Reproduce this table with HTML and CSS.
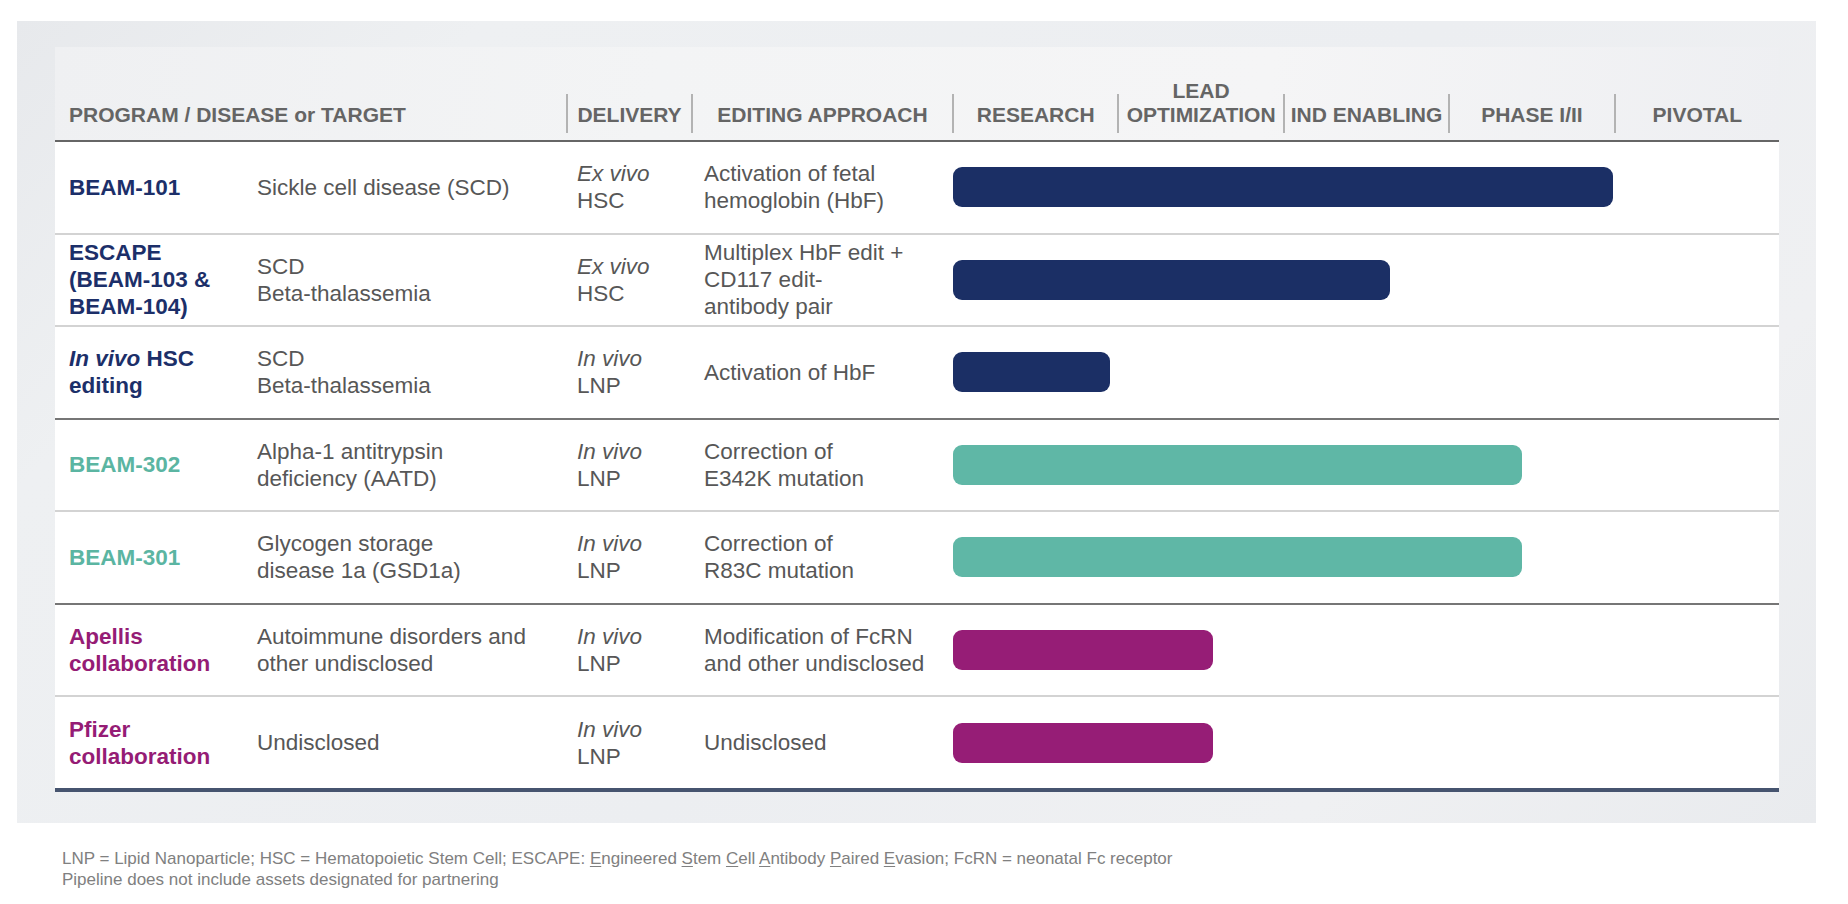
FILE: index.html
```html
<!DOCTYPE html>
<html lang="en">
<head>
<meta charset="utf-8">
<title>Pipeline</title>
<link rel="stylesheet" href="styles.css">
</head>
<body>
<div class="panel">
  <div class="pipeline">
    <div class="head">
      <div class="h h-prog">PROGRAM / DISEASE or TARGET</div>
      <div class="h">DELIVERY</div>
      <div class="h">EDITING APPROACH</div>
      <div class="h">RESEARCH</div>
      <div class="h">LEAD<br>OPTIMIZATION</div>
      <div class="h">IND ENABLING</div>
      <div class="h">PHASE I/II</div>
      <div class="h">PIVOTAL</div>
    </div>

    <div class="row navy">
      <div class="c prog">BEAM-101</div>
      <div class="c dis">Sickle cell disease (SCD)</div>
      <div class="c del"><em>Ex vivo</em><br>HSC</div>
      <div class="c edit">Activation of fetal<br>hemoglobin (HbF)</div>
      <div class="c track"><div class="bar" style="width:79.9%"></div></div>
    </div>

    <div class="row navy">
      <div class="c prog">ESCAPE<br>(BEAM-103 &amp;<br>BEAM-104)</div>
      <div class="c dis">SCD<br>Beta-thalassemia</div>
      <div class="c del"><em>Ex vivo</em><br>HSC</div>
      <div class="c edit">Multiplex HbF edit +<br>CD117 edit-<br>antibody pair</div>
      <div class="c track"><div class="bar" style="width:52.9%"></div></div>
    </div>

    <div class="row navy group-end">
      <div class="c prog"><em>In vivo</em> HSC<br>editing</div>
      <div class="c dis">SCD<br>Beta-thalassemia</div>
      <div class="c del"><em>In vivo</em><br>LNP</div>
      <div class="c edit">Activation of HbF</div>
      <div class="c track"><div class="bar" style="width:19%"></div></div>
    </div>

    <div class="row teal">
      <div class="c prog">BEAM-302</div>
      <div class="c dis">Alpha-1 antitrypsin<br>deficiency (AATD)</div>
      <div class="c del"><em>In vivo</em><br>LNP</div>
      <div class="c edit">Correction of<br>E342K mutation</div>
      <div class="c track"><div class="bar" style="width:68.9%"></div></div>
    </div>

    <div class="row teal group-end">
      <div class="c prog">BEAM-301</div>
      <div class="c dis">Glycogen storage<br>disease 1a (GSD1a)</div>
      <div class="c del"><em>In vivo</em><br>LNP</div>
      <div class="c edit">Correction of<br>R83C mutation</div>
      <div class="c track"><div class="bar" style="width:68.9%"></div></div>
    </div>

    <div class="row plum">
      <div class="c prog">Apellis<br>collaboration</div>
      <div class="c dis">Autoimmune disorders and<br>other undisclosed</div>
      <div class="c del"><em>In vivo</em><br>LNP</div>
      <div class="c edit">Modification of FcRN<br>and other undisclosed</div>
      <div class="c track"><div class="bar" style="width:31.5%"></div></div>
    </div>

    <div class="row plum last">
      <div class="c prog">Pfizer<br>collaboration</div>
      <div class="c dis">Undisclosed</div>
      <div class="c del"><em>In vivo</em><br>LNP</div>
      <div class="c edit">Undisclosed</div>
      <div class="c track"><div class="bar" style="width:31.5%"></div></div>
    </div>
  </div>
</div>

<div class="notes">
  <p>LNP = Lipid Nanoparticle; HSC = Hematopoietic Stem Cell; ESCAPE: <u>E</u>ngineered <u>S</u>tem <u>C</u>ell <u>A</u>ntibody <u>P</u>aired <u>E</u>vasion; FcRN = neonatal Fc receptor</p>
  <p>Pipeline does not include assets designated for partnering</p>
</div>
</body>
</html>
```

FILE: styles.css
```css
html, body {
  margin: 0;
  padding: 0;
  background: #ffffff;
}

body {
  font-family: "Liberation Sans", Arial, Helvetica, sans-serif;
  color: #575757;
}

.panel {
  margin: 21px 0 0 17px;
  width: 1799px;
  box-sizing: border-box;
  padding: 26px 37px 31px 38px;
  background:
    linear-gradient(135deg, #e7e9ec 0%, #eef0f2 18%, #eceef1 55%, #eff0f2 80%, #e9ebee 100%);
}

.pipeline {
  width: 1724px;
}

/* ---------- header ---------- */
.head {
  display: grid;
  grid-template-columns: 511px 125px 261px repeat(5, 1fr);
  align-items: end;
  height: 95px;
  box-sizing: border-box;
  padding-bottom: 7px;
  border-bottom: 2px solid #666666;
  background: linear-gradient(100deg, #eff0f2 0%, #f3f4f5 35%, #f5f5f6 70%, #eeeff2 100%);
}

.h {
  height: 39px;
  box-sizing: border-box;
  display: flex;
  align-items: flex-end;
  justify-content: center;
  text-align: center;
  padding-bottom: 6px;
  border-left: 2px solid #b3b3b3;
  font-size: 21px;
  line-height: 24px;
  font-weight: bold;
  color: #656565;
  white-space: nowrap;
}

.h-prog {
  border-left: none;
  justify-content: flex-start;
  text-align: left;
  padding-left: 14px;
}

/* ---------- rows ---------- */
.row {
  display: grid;
  grid-template-columns: 190px 321px 125px 261px 1fr;
  height: 92.5px;
  box-sizing: border-box;
  border-bottom: 2px solid #d3d3d3;
  background: #ffffff;
}

.row.group-end {
  border-bottom: 2px solid #767676;
}

.row.last {
  height: 95px;
  border-bottom: 4px solid #46546f;
}

.c {
  display: block;
  align-self: center;
  font-size: 22.5px;
  line-height: 27px;
  white-space: nowrap;
}

.c em {
  font-style: italic;
}

.prog {
  padding-left: 14px;
  font-weight: bold;
}

.dis {
  padding-left: 12px;
}

.del {
  padding-left: 11px;
}

.edit {
  padding-left: 13px;
}

.track {
  padding-left: 1px;
}

.bar {
  height: 40px;
  border-radius: 9px;
}

.navy .prog { color: #1c2f69; }
.navy .bar { background: #1b2f65; }

.teal .prog { color: #5bb5a2; }
.teal .bar { background: #5fb7a6; }

.plum .prog { color: #951c75; }
.plum .bar { background: #961d76; }

/* ---------- footnotes ---------- */
.notes {
  margin: 25px 0 0 62px;
  font-size: 17px;
  line-height: 21px;
  color: #808080;
}

.notes p {
  margin: 0;
}

.notes u {
  text-decoration: underline;
  text-underline-offset: 2px;
}
```
